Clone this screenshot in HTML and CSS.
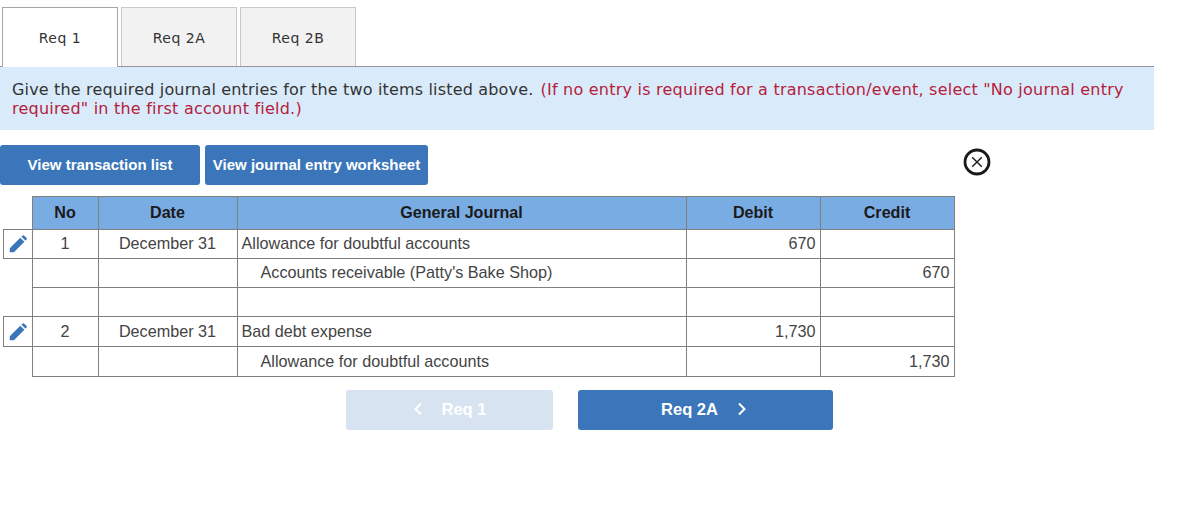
FILE: index.html
```html
<!DOCTYPE html>
<html lang="en">
<head>
    <meta charset="UTF-8">
    <title>Journal Entries</title>
    <link rel="stylesheet" href="styles.css">
</head>
<body>
    <div class="tabs">
        <div class="tab active">Req 1</div>
        <div class="tab">Req 2A</div>
        <div class="tab">Req 2B</div>
    </div>

    <div class="instructions"><span class="black">Give the required journal entries for the two items listed above.</span> <span class="red">(If no entry is required for a transaction/event, select "No journal entry required" in the first account field.)</span></div>

    <div class="toolbar">
        <button class="btn btn-list">View transaction list</button>
        <button class="btn btn-sheet">View journal entry worksheet</button>
        <svg class="close-icon" width="28" height="28" viewBox="0 0 28 28">
            <circle cx="14" cy="14" r="12" fill="none" stroke="#1a1a1a" stroke-width="2.8"/>
            <path d="M9.200 9.200 L18.800 18.800 M18.800 9.200 L9.200 18.800" stroke="#1a1a1a" stroke-width="1.400"/>
        </svg>
    </div>

    <table class="journal">
        <tr>
            <td class="edit-blank"></td>
            <th class="col-no">No</th>
            <th class="col-date">Date</th>
            <th class="col-account">General Journal</th>
            <th class="col-money">Debit</th>
            <th class="col-money">Credit</th>
        </tr>
        <tr>
            <td class="edit-cell">
                <svg width="18" height="18" viewBox="0 0 24 24"><path fill="#3a76b9" d="M1 23v-5.500L15 3.500l5.500 5.500L6.500 23zM16.500 2l1.800-1.500q.8-.6 1.600 0l3.600 3.600q.6.8 0 1.600L22 7.500z"/></svg>
            </td>
            <td class="center">1</td>
            <td class="center">December 31</td>
            <td>Allowance for doubtful accounts</td>
            <td class="num">670</td>
            <td class="num"></td>
        </tr>
        <tr>
            <td class="edit-blank"></td>
            <td></td>
            <td></td>
            <td class="indent">Accounts receivable (Patty's Bake Shop)</td>
            <td class="num"></td>
            <td class="num">670</td>
        </tr>
        <tr>
            <td class="edit-blank"></td>
            <td></td>
            <td></td>
            <td></td>
            <td></td>
            <td></td>
        </tr>
        <tr class="tall">
            <td class="edit-cell">
                <svg width="18" height="18" viewBox="0 0 24 24"><path fill="#3a76b9" d="M1 23v-5.500L15 3.500l5.500 5.500L6.500 23zM16.500 2l1.800-1.500q.8-.6 1.600 0l3.600 3.600q.6.8 0 1.600L22 7.500z"/></svg>
            </td>
            <td class="center">2</td>
            <td class="center">December 31</td>
            <td>Bad debt expense</td>
            <td class="num">1,730</td>
            <td class="num"></td>
        </tr>
        <tr class="tall">
            <td class="edit-blank"></td>
            <td></td>
            <td></td>
            <td class="indent">Allowance for doubtful accounts</td>
            <td class="num"></td>
            <td class="num">1,730</td>
        </tr>
    </table>

    <div class="pager">
        <button class="btn page-btn prev">
            <svg class="chev" width="10" height="14" viewBox="0 0 10 14"><path d="M8 1.500 L2.500 7 L8 12.500" fill="none" stroke="white" stroke-width="2"/></svg>
            Req 1
        </button>
        <button class="btn page-btn next">
            Req 2A
            <svg class="chev" width="10" height="14" viewBox="0 0 10 14"><path d="M2 1.500 L7.500 7 L2 12.500" fill="none" stroke="white" stroke-width="2"/></svg>
        </button>
    </div>
</body>
</html>
```

FILE: styles.css
```css
body {
    margin: 0;
    background-color: white;
    font-family: "Liberation Sans", Arial, sans-serif;
    font-size: 16px;
    color: #333;
}
.tabs {
    display: flex;
    gap: 3px;
    padding: 7px 0 0 2px;
    height: 59px;
}
.tab {
    width: 116px;
    box-sizing: border-box;
    height: 59px;
    padding-top: 20px;
    text-align: center;
    font-family: "DejaVu Sans", Verdana, sans-serif;
    font-size: 14px;
    letter-spacing: 0.5px;
    line-height: 20px;
    background-color: #f2f2f2;
    border: 1px solid #c8c8c8;
    border-bottom: none;
}
.tab.active {
    background-color: white;
    border-color: #a6a6a6;
    height: 60px;
    position: relative;
}
.instructions {
    width: 1154px;
    height: 64px;
    box-sizing: border-box;
    padding: 13px 12px 0;
    background-color: #d9ebfa;
    border-top: 1px solid #969696;
    font-family: "DejaVu Sans", Verdana, sans-serif;
    font-size: 16px;
    line-height: 19px;
    color: #333;
}
.black {
    letter-spacing: 0.17px;
}
.red {
    color: #b5213a;
    letter-spacing: 0.22px;
    margin-left: 2px;
}
.toolbar {
    display: flex;
    align-items: center;
    margin-top: 15px;
    height: 40px;
}
.btn {
    height: 40px;
    border: none;
    border-radius: 3px;
    background-color: #3a76b9;
    color: white;
    font-family: "Liberation Sans", Arial, sans-serif;
    font-size: 15px;
    font-weight: bold;
    padding: 0 0 2px;
}
.btn-list {
    width: 200px;
}
.btn-sheet {
    width: 223px;
    margin-left: 5px;
}
.close-icon {
    margin-left: 535px;
    margin-top: -6px;
}
.journal {
    border-collapse: collapse;
    table-layout: fixed;
    width: 951px;
    margin: 11px 0 0 3px;
    color: #444;
    font-size: 16.2px;
}
.journal th, .journal td {
    border: 1px solid #808080;
    height: 27px;
    padding: 0 4px 1px;
    box-sizing: content-box;
}
.journal tr.tall td {
    height: 29px;
    padding-bottom: 0;
}
.journal th {
    height: 31px;
    padding-bottom: 1px;
    background-color: #7aace4;
    color: #1a1a1a;
    font-size: 16.1px;
    font-weight: bold;
}
.journal td.edit-blank {
    width: 28px;
    padding: 0;
    border: none;
    border-right: 1px solid #808080;
}
.journal td.edit-cell {
    padding: 0;
    text-align: center;
    line-height: 0;
}
.col-no {
    width: 57px;
}
.col-date {
    width: 130px;
}
.col-account {
    width: 440px;
}
.col-money {
    width: 125px;
}
.center {
    text-align: center;
}
.num {
    text-align: right;
}
.journal td.indent {
    padding-left: 23px;
}
.pager {
    display: flex;
    gap: 25px;
    margin: 13px 0 0 346px;
}
.page-btn {
    display: flex;
    align-items: center;
    justify-content: center;
    gap: 19px;
    font-size: 16.5px;
}
.prev {
    width: 207px;
    background-color: #d8e3f1;
}
.next {
    width: 255px;
    padding-right: 3px;
}
```
